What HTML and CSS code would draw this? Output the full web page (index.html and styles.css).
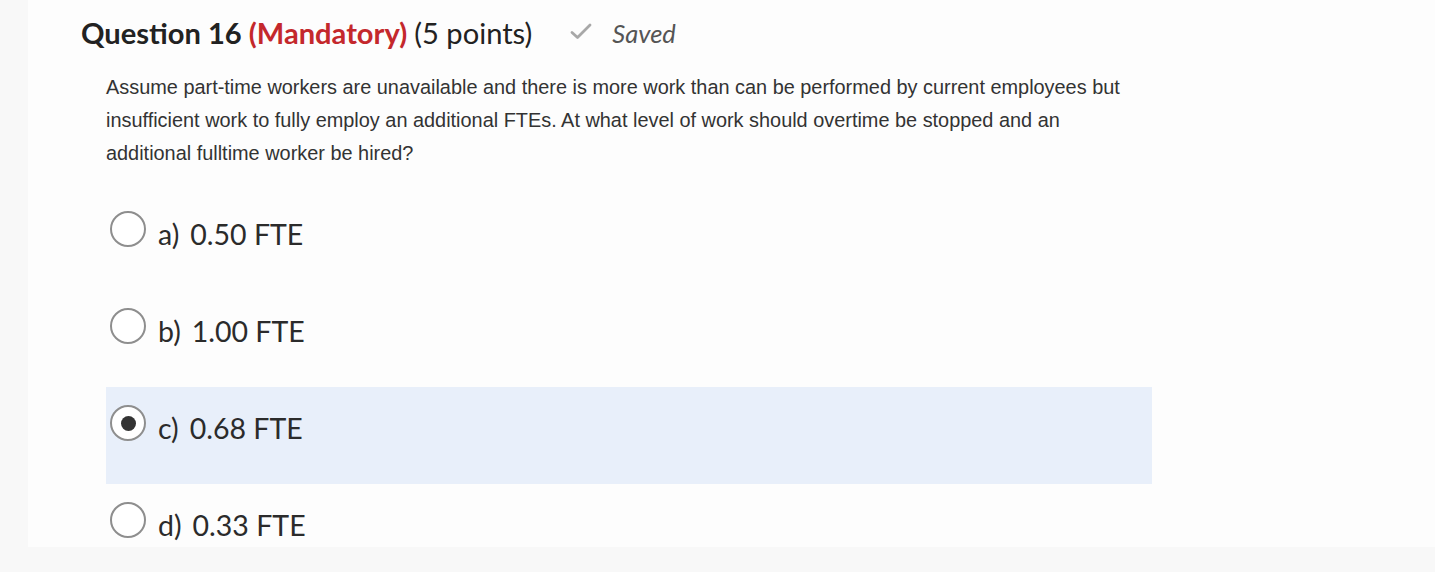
FILE: index.html
```html
<!DOCTYPE html>
<html>
<head>
<meta charset="utf-8">
<link rel="stylesheet" href="styles.css">
</head>
<body>
<div class="page">
  <div class="panel">
    <div class="qhead">
      <h2 class="qtitle">Question 16 <span class="mand">(Mandatory)</span> <span class="pts">(5 points)</span></h2>
      <div class="saved">
        <svg class="check" width="22" height="17" viewBox="0 0 22 17"><path d="M2 9.5 L7.5 14.5 L20 2" fill="none" stroke="#a8a8a8" stroke-width="2.8" stroke-linecap="round" stroke-linejoin="round"/></svg>
        <span class="savedtxt">Saved</span>
      </div>
    </div>
    <p class="qtext">Assume part-time workers are unavailable and there is more work than can be performed by current employees but insufficient work to fully employ an additional FTEs. At what level of work should overtime be stopped and an additional fulltime worker be hired?</p>
    <div class="options">
      <div class="opt"><span class="radio"></span><span class="letter">a)</span><span class="val">0.50 FTE</span></div>
      <div class="opt"><span class="radio"></span><span class="letter">b)</span><span class="val">1.00 FTE</span></div>
      <div class="opt selected"><span class="radio on"></span><span class="letter">c)</span><span class="val">0.68 FTE</span></div>
      <div class="opt"><span class="radio"></span><span class="letter">d)</span><span class="val">0.33 FTE</span></div>
    </div>
  </div>
</div>
</body>
</html>
```
FILE: styles.css
```css
html, body {
  margin: 0;
  padding: 0;
  background: #f8f8f8;
}
.page {
  padding-left: 28px;
  height: 572px;
  overflow: hidden;
}
.panel {
  background: #fdfdfd;
  height: 547px;
  padding-left: 53px;
  box-sizing: border-box;
  overflow: hidden;
}
.qhead {
  display: flex;
  align-items: center;
  padding-top: 15px;
  height: 36px;
}
.qtitle {
  margin: 0;
  font-family: Lato, sans-serif;
  font-size: 29.1px;
  font-weight: 700;
  color: #222;
  line-height: 36px;
  white-space: nowrap;
}
.mand {
  color: #c4282c;
}
.pts {
  font-weight: 400;
}
.saved {
  display: flex;
  align-items: center;
  margin-left: 38px;
}
.check {
  display: block;
  margin-top: -3px;
}
.savedtxt {
  margin-left: 20px;
  font-family: Lato, sans-serif;
  font-style: italic;
  font-size: 25.5px;
  color: #555;
}
.qtext {
  margin: 20px 0 0 25px;
  width: 1030px;
  font-family: "Liberation Sans", Arial, sans-serif;
  font-size: 19.9px;
  line-height: 33px;
  color: #333;
}
.options {
  margin-top: 23px;
  margin-left: 25px;
  width: 1046px;
}
.opt {
  display: flex;
  align-items: flex-start;
  height: 97px;
  box-sizing: border-box;
  padding-top: 18px;
  padding-left: 4px;
  font-family: Lato, sans-serif;
  font-size: 28.5px;
  line-height: 46px;
  color: #2b2b2b;
}
.opt.selected {
  background: #e8effa;
}
.radio {
  width: 32px;
  height: 32px;
  border: 2px solid #8e8e8e;
  border-radius: 50%;
  background: #fff;
  box-sizing: content-box;
  position: relative;
  flex: none;
}
.radio.on::after {
  content: "";
  position: absolute;
  left: 8.5px;
  top: 8.5px;
  width: 15px;
  height: 15px;
  border-radius: 50%;
  background: #333;
}
.letter {
  margin-left: 12px;
}
.val {
  margin-left: 11px;
}
```
